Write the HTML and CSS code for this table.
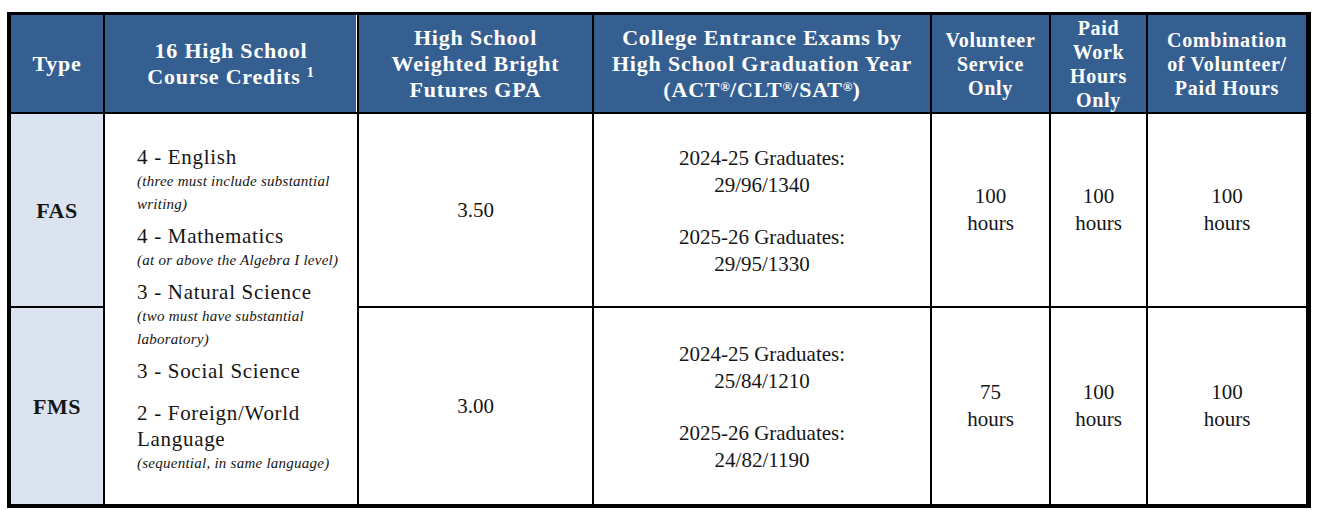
FILE: index.html
```html
<!DOCTYPE html>
<html lang="en">
<head>
<meta charset="utf-8">
<title>Bright Futures Requirements</title>
<link rel="stylesheet" href="styles.css">
</head>
<body>
<div class="table">
  <div class="th"><span>Type</span></div>
  <div class="th th-credits"><span>16 High School<br>Course Credits <sup class="fn">1</sup></span></div>
  <div class="th"><span>High School<br>Weighted Bright<br>Futures GPA</span></div>
  <div class="th"><span>College Entrance Exams by<br>High School Graduation Year<br>(ACT<sup class="reg">®</sup>/CLT<sup class="reg">®</sup>/SAT<sup class="reg">®</sup>)</span></div>
  <div class="th th-small"><span>Volunteer<br>Service<br>Only</span></div>
  <div class="th th-small"><span>Paid<br>Work<br>Hours<br>Only</span></div>
  <div class="th th-small"><span>Combination<br>of Volunteer/<br>Paid Hours</span></div>

  <div class="td type"><span>FAS</span></div>
  <div class="td credits">
    <div class="item">
      <div class="course">4 - English</div>
      <div class="note">(three must include substantial<br>writing)</div>
    </div>
    <div class="item">
      <div class="course">4 - Mathematics</div>
      <div class="note">(at or above the Algebra I level)</div>
    </div>
    <div class="item">
      <div class="course">3 - Natural Science</div>
      <div class="note">(two must have substantial<br>laboratory)</div>
    </div>
    <div class="item item-plain">
      <div class="course">3 - Social Science</div>
    </div>
    <div class="item">
      <div class="course">2 - Foreign/World<br>Language</div>
      <div class="note">(sequential, in same language)</div>
    </div>
  </div>
  <div class="td"><span>3.50</span></div>
  <div class="td exams">
    <p>2024-25 Graduates:<br>29/96/1340</p>
    <p>2025-26 Graduates:<br>29/95/1330</p>
  </div>
  <div class="td"><span>100<br>hours</span></div>
  <div class="td"><span>100<br>hours</span></div>
  <div class="td"><span>100<br>hours</span></div>

  <div class="td type"><span>FMS</span></div>
  <div class="td"><span>3.00</span></div>
  <div class="td exams">
    <p>2024-25 Graduates:<br>25/84/1210</p>
    <p>2025-26 Graduates:<br>24/82/1190</p>
  </div>
  <div class="td"><span>75<br>hours</span></div>
  <div class="td"><span>100<br>hours</span></div>
  <div class="td"><span>100<br>hours</span></div>
</div>
</body>
</html>
```

FILE: styles.css
```css
html, body {
  margin: 0;
  padding: 0;
  background: #ffffff;
}
body {
  padding: 12px 0 0 7px;
  font-family: "Liberation Serif", "Tinos", "Times New Roman", "DejaVu Serif", serif;
  color: #161616;
}
.table {
  width: 1304px;
  height: 496px;
  box-sizing: border-box;
  border-style: solid;
  border-color: #000;
  border-width: 3px 5px 4px 4px;
  background: #000;
  display: grid;
  grid-template-columns: 92px 252px 233px 336px 117px 95px 158px;
  grid-template-rows: 97px 192px 196px;
  gap: 2px;
}
.th {
  background: #365f91;
  color: #ffffff;
  font-weight: bold;
  font-size: 22px;
  line-height: 26px;
  letter-spacing: 0.8px;
  text-align: center;
  display: flex;
  align-items: center;
  justify-content: center;
}
.th-credits {
  box-shadow: inset -1px 0 0 #ffffff;
}
.th-small {
  font-size: 20px;
  line-height: 24px;
  letter-spacing: 0.7px;
}
.fn {
  font-size: 14px;
  vertical-align: 7px;
  line-height: 0;
}
.reg {
  font-size: 13px;
  vertical-align: 6px;
  line-height: 0;
  letter-spacing: 0;
}
.td {
  background: #ffffff;
  font-size: 21px;
  line-height: 27px;
  text-align: center;
  display: flex;
  flex-direction: column;
  align-items: center;
  justify-content: center;
}
.type {
  background: #dbe3f0;
  font-weight: bold;
  font-size: 22px;
  letter-spacing: 0.5px;
}
.credits {
  grid-row: 2 / span 2;
  grid-column: 2;
  align-items: stretch;
  text-align: left;
  padding: 0 4px 0 32px;
  gap: 7px;
}
.course {
  font-size: 21px;
  line-height: 26px;
  letter-spacing: 0.7px;
  white-space: nowrap;
}
.note {
  font-style: italic;
  font-size: 15px;
  line-height: 23px;
  letter-spacing: 0.25px;
  white-space: nowrap;
}
.item-plain {
  margin-bottom: 9px;
}
.exams {
  padding-top: 2px;
}
.exams p {
  margin: 0;
}
.exams p + p {
  margin-top: 25px;
}
```
